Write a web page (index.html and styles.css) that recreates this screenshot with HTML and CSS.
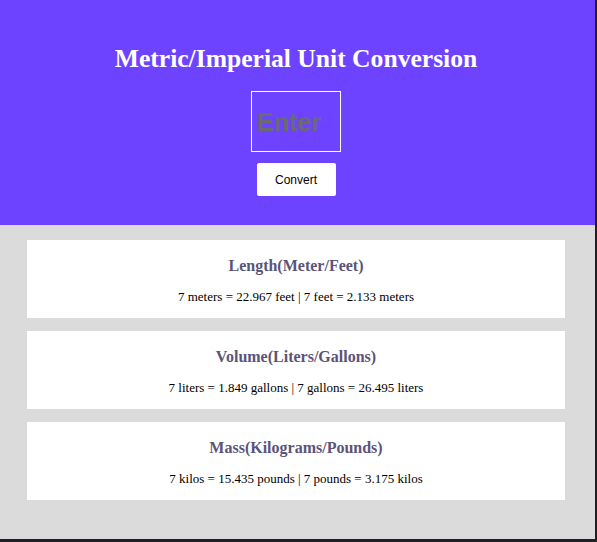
FILE: index.html
```html
<!DOCTYPE html>
<html>
<head>
<meta charset="utf-8">
<link rel="stylesheet" href="styles.css">
</head>
<body>
<div class="page">
  <header class="hero">
    <h1 class="title">Metric/Imperial Unit Conversion</h1>
    <input class="num-input" type="text" placeholder="Enter">
    <button class="convert-btn">Convert</button>
  </header>
  <main class="results">
    <section class="card">
      <h2 class="card-title">Length(Meter/Feet)</h2>
      <p class="card-text">7 meters = 22.967 feet | 7 feet = 2.133 meters</p>
    </section>
    <section class="card">
      <h2 class="card-title">Volume(Liters/Gallons)</h2>
      <p class="card-text">7 liters = 1.849 gallons | 7 gallons = 26.495 liters</p>
    </section>
    <section class="card">
      <h2 class="card-title">Mass(Kilograms/Pounds)</h2>
      <p class="card-text">7 kilos = 15.435 pounds | 7 pounds = 3.175 kilos</p>
    </section>
  </main>
</div>
</body>
</html>
```
FILE: styles.css
```css
html, body {
  margin: 0;
  padding: 0;
  background: #1f1f24;
}
body {
  width: 597px;
  height: 542px;
  overflow: hidden;
}
.page {
  width: 595px;
  height: 539px;
  background: #dbdbdb;
  font-family: "Liberation Serif", "Times New Roman", serif;
}
.hero {
  background: #6d43ff;
  height: 225px;
  box-sizing: border-box;
  padding: 44px 3px 0 0;
  display: flex;
  flex-direction: column;
  align-items: center;
}
.title {
  margin: 0;
  color: #ffffff;
  font-size: 25.6px;
  font-weight: bold;
  line-height: 30px;
}
.num-input {
  margin-top: 17px;
  width: 90px;
  height: 61px;
  box-sizing: border-box;
  border: 1px solid #ffffff;
  background: transparent;
  padding: 1px 5px 0;
  font-family: "Liberation Sans", Arial, sans-serif;
  font-size: 25px;
  font-weight: bold;
  color: #6b6b6b;
  outline: none;
}
.num-input::placeholder {
  color: #6b6b6b;
  opacity: 1;
}
.convert-btn {
  margin-top: 11px;
  width: 79px;
  height: 33px;
  border: none;
  border-radius: 2px;
  background: #ffffff;
  color: #000000;
  font-family: "Liberation Sans", Arial, sans-serif;
  font-size: 12px;
  padding: 0;
}
.results {
  padding: 15px 30px 0 27px;
  display: flex;
  flex-direction: column;
  gap: 13px;
}
.card {
  background: #ffffff;
  height: 78px;
  box-sizing: border-box;
  padding-top: 17px;
  text-align: center;
}
.card-title {
  margin: 0;
  font-size: 16px;
  font-weight: bold;
  color: #5b5478;
  line-height: 18px;
}
.card-text {
  margin: 14px 0 0;
  font-size: 13px;
  color: #000000;
  line-height: 15px;
}
```
